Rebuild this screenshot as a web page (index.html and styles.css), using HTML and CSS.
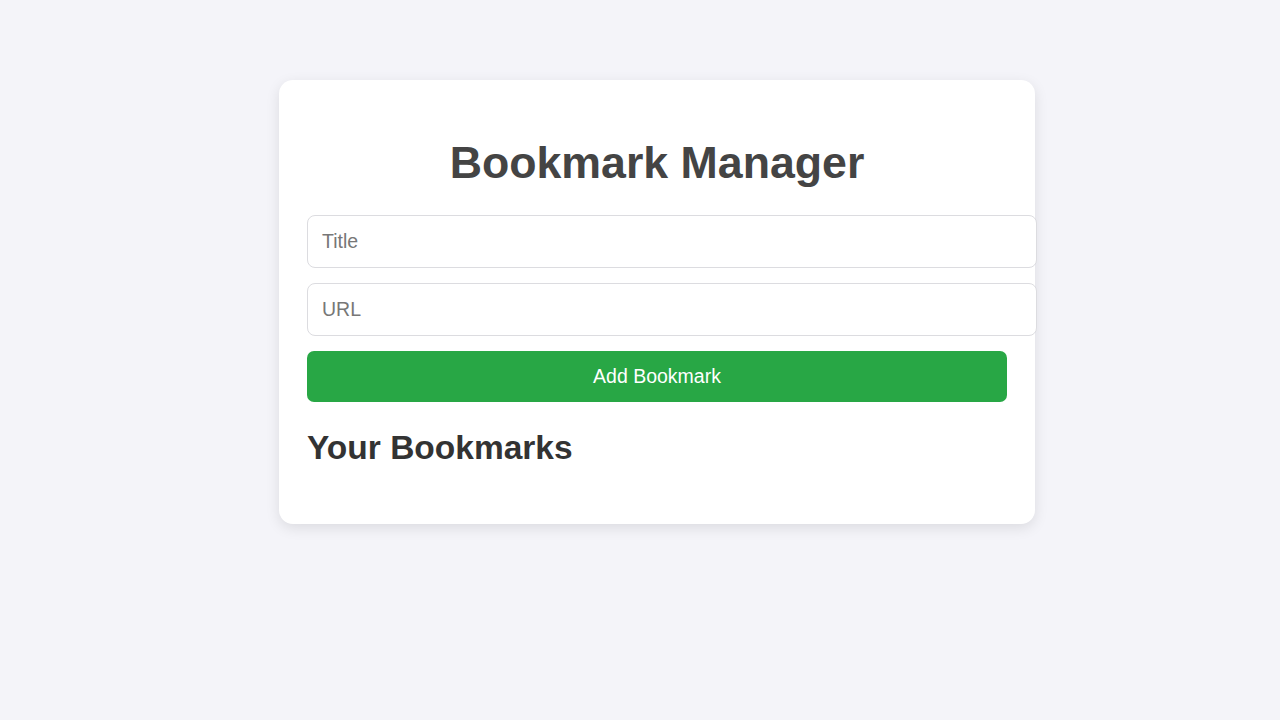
FILE: index.html
```html
<!DOCTYPE html>
<html>
<head>
<meta charset="utf-8">
<title>Bookmark Manager</title>
<link rel="stylesheet" href="styles.css">
</head>
<body>
<div class="card">
  <h1 class="title">Bookmark Manager</h1>
  <form class="form">
    <input class="field" type="text" placeholder="Title">
    <input class="field" type="text" placeholder="URL">
    <button class="add" type="button">Add Bookmark</button>
  </form>
  <h2 class="subtitle">Your Bookmarks</h2>
  <ul class="list"></ul>
</div>
</body>
</html>
```
FILE: styles.css
```css
html, body {
  margin: 0;
  padding: 0;
}
body {
  background: #f4f4f9;
  font-family: "Liberation Sans", Arial, sans-serif;
  min-height: 720px;
  padding-top: 80px;
  box-sizing: border-box;
}
.card {
  width: 700px;
  margin: 0 auto 0 279px;
  background: #fff;
  border-radius: 14px;
  padding: 28px;
  box-shadow: 0 4px 14px rgba(0, 0, 0, 0.1);
}
.title {
  margin: 29px 0 26px;
  font-size: 44.7px;
  font-weight: bold;
  color: #444;
  text-align: center;
  line-height: 52px;
}
.form {
  display: flex;
  flex-direction: column;
  align-items: flex-start;
  gap: 15px;
}
.field {
  width: 100%;
  height: 53px;
  box-sizing: content-box;
  padding: 0 14px;
  font-size: 19.5px;
  font-family: "Liberation Sans", Arial, sans-serif;
  border: 1px solid #dcdce0;
  border-radius: 8px;
  color: #333;
  outline: none;
  margin: 0;
  height: 51px;
}
.field::placeholder {
  color: #777;
}
.add {
  width: 700px;
  height: 51px;
  border: none;
  border-radius: 7px;
  background: #28a745;
  color: #fff;
  font-size: 19.5px;
  font-family: "Liberation Sans", Arial, sans-serif;
  margin: 0;
}
.subtitle {
  margin: 27px 0 0;
  font-size: 33.5px;
  line-height: 38px;
  color: #333;
}
.list {
  margin: 0;
  padding: 0;
  height: 29px;
}
```
